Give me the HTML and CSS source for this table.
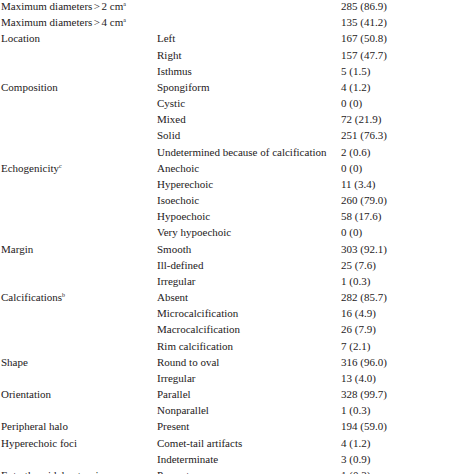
FILE: index.html
```html
<!DOCTYPE html>
<html>
<head>
<meta charset="utf-8">
<link rel="stylesheet" href="styles.css">
</head>
<body>
<div class="table">
  <div class="c1">Maximum diameters<span class="thin"> </span>&gt;<span class="thin"> </span>2 cm<sup>a</sup></div><div class="c2"></div><div class="c3">285 (86.9)</div>
  <div class="c1">Maximum diameters<span class="thin"> </span>&gt;<span class="thin"> </span>4 cm<sup>a</sup></div><div class="c2"></div><div class="c3">135 (41.2)</div>
  <div class="c1">Location</div><div class="c2">Left</div><div class="c3">167 (50.8)</div>
  <div class="c1"></div><div class="c2">Right</div><div class="c3">157 (47.7)</div>
  <div class="c1"></div><div class="c2">Isthmus</div><div class="c3">5 (1.5)</div>
  <div class="c1">Composition</div><div class="c2">Spongiform</div><div class="c3">4 (1.2)</div>
  <div class="c1"></div><div class="c2">Cystic</div><div class="c3">0 (0)</div>
  <div class="c1"></div><div class="c2">Mixed</div><div class="c3">72 (21.9)</div>
  <div class="c1"></div><div class="c2">Solid</div><div class="c3">251 (76.3)</div>
  <div class="c1"></div><div class="c2">Undetermined because of calcification</div><div class="c3">2 (0.6)</div>
  <div class="c1">Echogenicity<sup>c</sup></div><div class="c2">Anechoic</div><div class="c3">0 (0)</div>
  <div class="c1"></div><div class="c2">Hyperechoic</div><div class="c3">11 (3.4)</div>
  <div class="c1"></div><div class="c2">Isoechoic</div><div class="c3">260 (79.0)</div>
  <div class="c1"></div><div class="c2">Hypoechoic</div><div class="c3">58 (17.6)</div>
  <div class="c1"></div><div class="c2">Very hypoechoic</div><div class="c3">0 (0)</div>
  <div class="c1">Margin</div><div class="c2">Smooth</div><div class="c3">303 (92.1)</div>
  <div class="c1"></div><div class="c2">Ill-defined</div><div class="c3">25 (7.6)</div>
  <div class="c1"></div><div class="c2">Irregular</div><div class="c3">1 (0.3)</div>
  <div class="c1">Calcifications<sup>b</sup></div><div class="c2">Absent</div><div class="c3">282 (85.7)</div>
  <div class="c1"></div><div class="c2">Microcalcification</div><div class="c3">16 (4.9)</div>
  <div class="c1"></div><div class="c2">Macrocalcification</div><div class="c3">26 (7.9)</div>
  <div class="c1"></div><div class="c2">Rim calcification</div><div class="c3">7 (2.1)</div>
  <div class="c1">Shape</div><div class="c2">Round to oval</div><div class="c3">316 (96.0)</div>
  <div class="c1"></div><div class="c2">Irregular</div><div class="c3">13 (4.0)</div>
  <div class="c1">Orientation</div><div class="c2">Parallel</div><div class="c3">328 (99.7)</div>
  <div class="c1"></div><div class="c2">Nonparallel</div><div class="c3">1 (0.3)</div>
  <div class="c1">Peripheral halo</div><div class="c2">Present</div><div class="c3">194 (59.0)</div>
  <div class="c1">Hyperechoic foci</div><div class="c2">Comet-tail artifacts</div><div class="c3">4 (1.2)</div>
  <div class="c1"></div><div class="c2">Indeterminate</div><div class="c3">3 (0.9)</div>
  <div class="c1">Extrathyroidal extension</div><div class="c2">Present</div><div class="c3">1 (0.3)</div>
</div>
</body>
</html>
```
FILE: styles.css
```css
html, body {
  margin: 0;
  padding: 0;
  background: #ffffff;
  overflow: hidden;
}
.table {
  display: grid;
  grid-template-columns: 156px 184px 1fr;
  grid-auto-rows: 16.18px;
  margin-top: -2px;
  padding-left: 1px;
  font-family: "Liberation Serif", "Times New Roman", serif;
  font-size: 11px;
  line-height: 16.18px;
  color: #1e1a1b;
  white-space: nowrap;
}
.thin {
  font-size: 6px;
}
.table sup {
  font-size: 6px;
  line-height: 0;
  vertical-align: 4px;
}
```
